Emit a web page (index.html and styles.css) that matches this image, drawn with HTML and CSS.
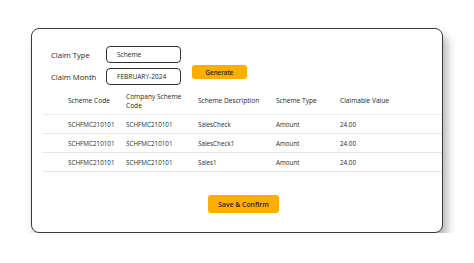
FILE: index.html
```html
<!DOCTYPE html>
<html>
<head>
<meta charset="utf-8">
<link rel="stylesheet" href="styles.css">
</head>
<body>
<div class="card">
  <div class="form">
    <div class="form-row">
      <span class="label">Claim Type</span>
      <div class="input">Scheme</div>
    </div>
    <div class="form-row">
      <span class="label">Claim Month</span>
      <div class="input">FEBRUARY-2024</div>
      <button class="btn btn-gen">Generate</button>
    </div>
  </div>
  <div class="table">
    <div class="tr th">
      <div>Scheme Code</div>
      <div>Company Scheme<br>Code</div>
      <div>Scheme Description</div>
      <div>Scheme Type</div>
      <div>Claimable Value</div>
    </div>
    <div class="tr">
      <div>SCHFMC210101</div><div>SCHFMC210101</div><div>SalesCheck</div><div>Amount</div><div>24.00</div>
    </div>
    <div class="tr">
      <div>SCHFMC210101</div><div>SCHFMC210101</div><div>SalesCheck1</div><div>Amount</div><div>24.00</div>
    </div>
    <div class="tr">
      <div>SCHFMC210101</div><div>SCHFMC210101</div><div>Sales1</div><div>Amount</div><div>24.00</div>
    </div>
  </div>
  <div class="actions">
    <button class="btn btn-save">Save &amp; Confirm</button>
  </div>
</div>
</body>
</html>
```
FILE: styles.css
```css
* { box-sizing: border-box; }
html, body { margin: 0; padding: 0; background: #fff; }
body {
  font-family: "Open Sans", "Liberation Sans", sans-serif;
  color: #222;
  padding: 28px 0 0 31px;
}
.card {
  width: 412px;
  height: 205px;
  border: 1px solid #3a3a3a;
  border-radius: 8px;
  background: #fff;
  box-shadow: 4px 7px 10px rgba(0,0,0,0.3);
  padding: 17px 0 0 11px;
}
.form {
  display: flex;
  flex-direction: column;
  gap: 5px;
  padding-left: 8px;
}
.form-row {
  display: flex;
  align-items: center;
  height: 17px;
}
.label {
  width: 55px;
  font-size: 7.6px;
  color: #1e1e1e;
}
.input {
  width: 75px;
  height: 17px;
  border: 1px solid #333;
  border-radius: 4px;
  font-size: 6.6px;
  line-height: 15px;
  padding-left: 10px;
  color: #1e1e1e;
}
.btn {
  font-family: inherit;
  border: none;
  background: #ffae00;
  color: #1e1e1e;
  font-weight: 600;
  border-radius: 3px;
  padding: 0;
  cursor: pointer;
}
.btn-gen {
  margin-left: 11px;
  margin-top: -3px;
  width: 55px;
  height: 14px;
  font-size: 6.2px;
  align-self: flex-start;
}
.table {
  margin-top: 4px;
}
.tr {
  display: grid;
  grid-template-columns: 58px 72px 78px 64px 1fr;
  padding-left: 25px;
  height: 19px;
  align-items: center;
  border-bottom: 1px solid #e6e6e6;
  font-size: 6.3px;
  color: #2a2a2a;
}
.tr.th {
  height: 26px;
  font-size: 6.6px;
  color: #1e1e1e;
  line-height: 8.5px;
  border-bottom: 1px solid #ececec;
}
.actions {
  display: flex;
  justify-content: center;
  padding-top: 23px;
  padding-left: 2px;
}
.btn-save {
  width: 71px;
  height: 18px;
  font-size: 6.8px;
  border-radius: 3px;
}
```
